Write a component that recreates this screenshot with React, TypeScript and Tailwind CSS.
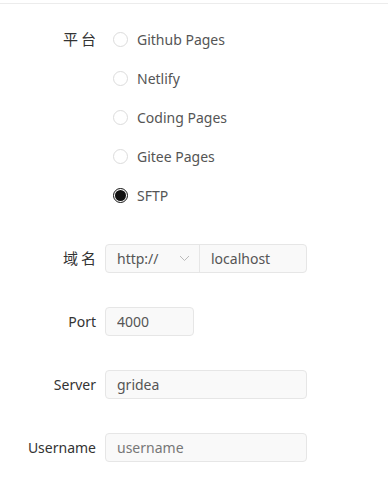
import { useState } from 'react'

const platforms = [
  { value: 'github', label: 'Github Pages' },
  { value: 'netlify', label: 'Netlify' },
  { value: 'coding', label: 'Coding Pages' },
  { value: 'gitee', label: 'Gitee Pages' },
  { value: 'sftp', label: 'SFTP' },
]

function Label({ children }: { children: React.ReactNode }) {
  return (
    <div className="w-[96px] shrink-0 text-right text-[14px] text-[#333]">{children}</div>
  )
}

function TextBox({ value, width }: { value: string; width: string }) {
  return (
    <input
      defaultValue={value}
      className={`${width} h-[29px] rounded-[4px] border border-[#e6e6e6] bg-[#f9f9f9] px-[11px] text-[14px] text-[#555] outline-none`}
    />
  )
}

export default function App() {
  const [platform, setPlatform] = useState('sftp')

  return (
    <div className="w-[388px] h-[484px] bg-white overflow-hidden font-['Noto_Sans','Noto_Sans_CJK_SC',sans-serif]">
      <div className="mt-[3px] border-t border-[#ececec]" />

      {/* 平台 */}
      <div className="flex mt-[16px]">
        <div className="w-[96px] shrink-0 flex justify-end h-[39px] items-center">
          <span className="text-[15px] text-[#333] tracking-[3px] mr-[-3px]">平台</span>
        </div>
        <div className="flex flex-col pl-[17px]">
          {platforms.map(p => {
            const checked = p.value === platform
            return (
              <label
                key={p.value}
                onClick={() => setPlatform(p.value)}
                className="flex items-center h-[39px] cursor-pointer"
              >
                {checked ? (
                  <span className="w-[15px] h-[15px] rounded-full border border-[#111] bg-white flex items-center justify-center">
                    <span className="w-[11px] h-[11px] rounded-full bg-[#111]" />
                  </span>
                ) : (
                  <span className="w-[15px] h-[15px] rounded-full border border-[#dcdcdc] bg-white" />
                )}
                <span className="ml-[9px] text-[14px] text-[#555]">{p.label}</span>
              </label>
            )
          })}
        </div>
      </div>

      {/* 域名 */}
      <div className="flex items-center mt-[29px]">
        <div className="w-[96px] shrink-0 flex justify-end">
          <span className="text-[15px] text-[#333] tracking-[3px] mr-[-3px]">域名</span>
        </div>
        <div className="ml-[9px] flex h-[29px] w-[202px] rounded-[4px] border border-[#e6e6e6] bg-[#f9f9f9]">
          <div className="w-[94px] flex items-center justify-between pl-[11px] pr-[9px] border-r border-[#e6e6e6]">
            <span className="text-[14px] text-[#555]">http://</span>
            <svg width="11" height="7" viewBox="0 0 11 7" fill="none">
              <path d="M1 1l4.5 4.5L10 1" stroke="#bbb" strokeWidth="1" />
            </svg>
          </div>
          <div className="flex-1 flex items-center pl-[11px] text-[14px] text-[#555]">localhost</div>
        </div>
      </div>

      {/* Port */}
      <div className="flex items-center mt-[34px]">
        <Label>Port</Label>
        <div className="ml-[9px]">
          <TextBox value="4000" width="w-[89px]" />
        </div>
      </div>

      {/* Server */}
      <div className="flex items-center mt-[34px]">
        <Label>Server</Label>
        <div className="ml-[9px]">
          <TextBox value="gridea" width="w-[202px]" />
        </div>
      </div>

      {/* Username */}
      <div className="flex items-center mt-[34px]">
        <Label>Username</Label>
        <div className="ml-[9px]">
          <input
            placeholder="username"
            className="w-[202px] h-[29px] rounded-[4px] border border-[#e6e6e6] bg-[#f9f9f9] px-[11px] text-[14px] text-[#555] placeholder:text-[#777] outline-none"
          />
        </div>
      </div>
    </div>
  )
}
